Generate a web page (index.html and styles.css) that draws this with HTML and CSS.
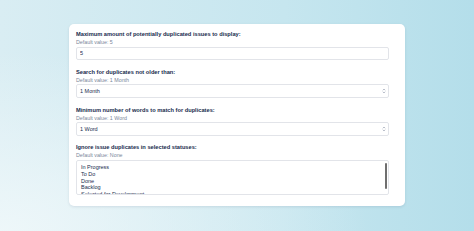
FILE: index.html
```html
<!DOCTYPE html>
<html lang="en">
<head>
    <meta charset="UTF-8">
    <title>Duplicate settings</title>
    <link rel="stylesheet" href="styles.css">
</head>
<body>

    <div class="card">

        <div class="field">
            <div class="label">Maximum amount of potentially duplicated issues to display:</div>
            <div class="hint">Default value: 5</div>
            <input type="text" class="text-input" value="5">
        </div>

        <div class="field">
            <div class="label">Search for duplicates not older than:</div>
            <div class="hint">Default value: 1 Month</div>
            <div class="select">
                <span>1 Month</span>
                <svg class="chevron" width="4" height="6" viewBox="0 0 4 6">
                    <path d="M0.8 2.3 L2 1 L3.2 2.3 M0.8 3.7 L2 5 L3.2 3.7" fill="none" stroke="#8a94a6" stroke-width="0.6"/>
                </svg>
            </div>
        </div>

        <div class="field">
            <div class="label">Minimum number of words to match for duplicates:</div>
            <div class="hint">Default value: 1 Word</div>
            <div class="select">
                <span>1 Word</span>
                <svg class="chevron" width="4" height="6" viewBox="0 0 4 6">
                    <path d="M0.8 2.3 L2 1 L3.2 2.3 M0.8 3.7 L2 5 L3.2 3.7" fill="none" stroke="#8a94a6" stroke-width="0.6"/>
                </svg>
            </div>
        </div>

        <div class="field last">
            <div class="label">Ignore issue duplicates in selected statuses:</div>
            <div class="hint">Default value: None</div>
            <div class="multi">
                <div class="option">In Progress</div>
                <div class="option">To Do</div>
                <div class="option">Done</div>
                <div class="option">Backlog</div>
                <div class="option">Selected for Development</div>
                <div class="scrollbar"></div>
            </div>
        </div>

    </div>

</body>
</html>
```

FILE: styles.css
```css
html, body{
    margin: 0;
    height: 100%;
}

body{
    width: 474px;
    height: 231px;
    overflow: hidden;
    font-family: "Liberation Sans", Arial, sans-serif;
    color: #172b4d;
    background:
        radial-gradient(ellipse at 0% 100%, rgba(240, 248, 250, 0.9) 0%, rgba(240, 248, 250, 0) 55%),
        linear-gradient(to right, #d9edf3 0%, #c6e6ef 60%, #b4deea 100%);
}

.card{
    box-sizing: border-box;
    margin: 24px 0 0 69px;
    width: 336px;
    height: 182px;
    padding: 6px 16px 0 7px;
    background-color: #ffffff;
    border-radius: 5px;
    box-shadow: 0 1px 3px rgba(9, 30, 66, 0.10);
}

.field{
    margin-bottom: 7.8px;
}

.label{
    font-size: 5.7px;
    font-weight: bold;
    line-height: 8px;
}

.hint{
    font-size: 5.3px;
    line-height: 8px;
    color: #7a869a;
    margin-bottom: 0.5px;
}

.text-input,
.select{
    box-sizing: border-box;
    display: block;
    width: 100%;
    height: 13.5px;
    margin: 0;
    padding: 0 3px;
    border: 1px solid #e2e4e9;
    border-radius: 2px;
    background-color: #ffffff;
    font-family: "Liberation Sans", Arial, sans-serif;
    font-size: 5.5px;
    color: #172b4d;
    outline: none;
}

.select{
    display: flex;
    align-items: center;
    justify-content: space-between;
    padding: 0 2px 0 3px;
}

.chevron{
    flex: none;
}

.multi{
    position: relative;
    box-sizing: border-box;
    height: 35px;
    padding: 3.3px 4px 0 4px;
    border: 1px solid #e2e4e9;
    border-radius: 2px;
    overflow: hidden;
}

.option{
    font-size: 5.5px;
    line-height: 6.7px;
    color: #172b4d;
    white-space: nowrap;
}

.scrollbar{
    position: absolute;
    right: 1.5px;
    top: 2px;
    width: 1.5px;
    height: 26px;
    border-radius: 1px;
    background-color: #6f6f6f;
}
```
